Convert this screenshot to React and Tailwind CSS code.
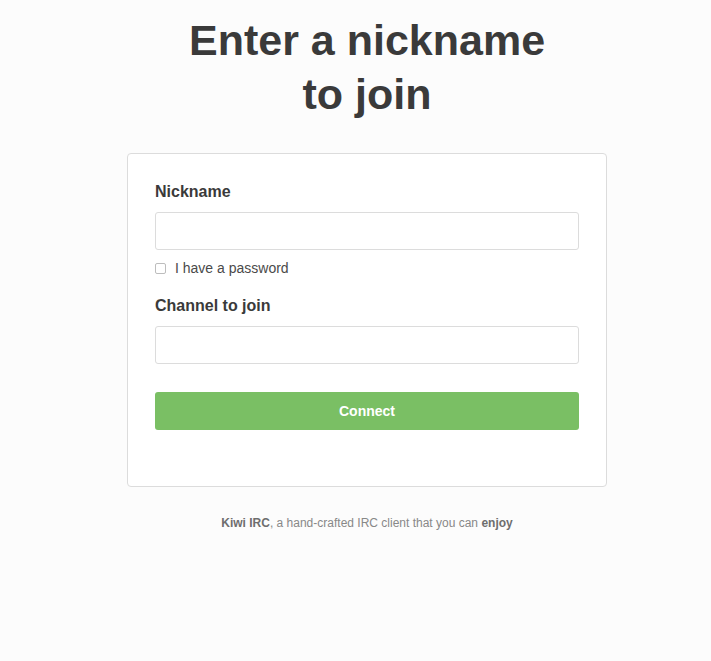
export default function App() {
  return (
    <div className="min-h-screen bg-[#fcfcfc] font-['Liberation_Sans',Arial,sans-serif] text-[#3a3a3a]">
      <div className="flex flex-col items-center pt-[13px] pl-[23px]">
        <h1 className="text-center text-[43px] font-bold leading-[54px] text-[#3a3a3a]">
          Enter a nickname
          <br />
          to join
        </h1>

        <div className="mt-[32px] w-[480px] rounded-[4px] border border-[#dcdcdc] bg-white px-[27px] pt-[27px] pb-[56px]">
          <label className="block text-[16px] font-bold leading-[22px] text-[#3a3a3a]">Nickname</label>
          <input
            type="text"
            className="mt-[9px] block h-[38px] w-full rounded-[3px] border border-[#dcdcdc] bg-white px-3 outline-none"
          />
          <label className="mt-[10px] flex items-center gap-[9px] text-[14px] leading-[16px] text-[#4a4a4a]">
            <span className="inline-block h-[11px] w-[11px] rounded-[2px] border border-[#bdbdbd] bg-white" />
            I have a password
          </label>

          <label className="mt-[19px] block text-[16px] font-bold leading-[22px] text-[#3a3a3a]">Channel to join</label>
          <input
            type="text"
            className="mt-[9px] block h-[38px] w-full rounded-[3px] border border-[#dcdcdc] bg-white px-3 outline-none"
          />

          <button className="mt-[28px] flex h-[38px] w-full items-center justify-center rounded-[3px] bg-[#7abf64] text-[14px] font-bold text-white">
            Connect
          </button>
        </div>

        <p className="mt-[27px] text-[12px] text-[#888888]">
          <span className="font-bold text-[#6e6e6e]">Kiwi IRC</span>, a hand-crafted IRC client that you can{" "}
          <span className="font-bold text-[#6e6e6e]">enjoy</span>
        </p>
      </div>
    </div>
  );
}
